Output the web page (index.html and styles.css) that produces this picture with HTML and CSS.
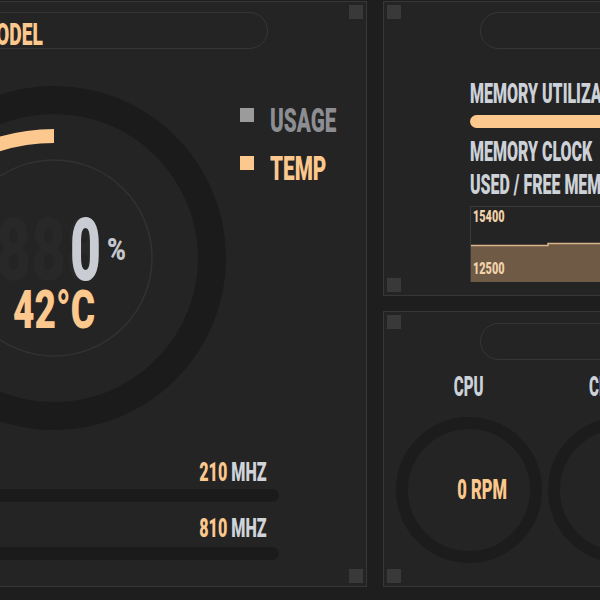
FILE: index.html
```html
<!DOCTYPE html>
<html lang="en">
<head>
<meta charset="utf-8">
<title>GPU Monitor</title>
<link rel="stylesheet" href="styles.css">
</head>
<body>
<div class="dash">
  <section class="panel panel-gpu">
    <i class="corner tl"></i><i class="corner tr"></i><i class="corner bl"></i><i class="corner br"></i>
    <div class="pill pill-gpu"><span class="cond pill-title">GPU MODEL</span></div>
    <div class="gauge-row">
      <svg class="gauge" width="350" height="350" viewBox="0 0 350 350">
        <circle class="g-ring" cx="175" cy="175" r="158"/>
        <circle class="g-inner" cx="175" cy="175" r="98"/>
        <path class="g-arc" d="M53 97.5 A190 190 0 0 1 175 53"/>
        <text class="g-ghost" x="117" y="197" textLength="105" lengthAdjust="spacingAndGlyphs">888</text>
        <text class="g-value" x="191" y="197" textLength="31" lengthAdjust="spacingAndGlyphs">0</text>
        <text class="g-unit" x="228" y="177" textLength="19" lengthAdjust="spacingAndGlyphs">%</text>
        <text class="g-temp" x="134" y="245" textLength="82" lengthAdjust="spacingAndGlyphs">42°C</text>
      </svg>
      <ul class="legend">
        <li class="legend-item usage"><i class="swatch"></i><span class="cond">USAGE</span></li>
        <li class="legend-item temp"><i class="swatch"></i><span class="cond">TEMP</span></li>
      </ul>
    </div>
    <div class="clocks">
      <div class="clock-label"><span class="cond"><b>210</b> MHZ</span></div>
      <div class="track"></div>
      <div class="clock-label second"><span class="cond"><b>810</b> MHZ</span></div>
      <div class="track second"></div>
    </div>
  </section>

  <div class="col-right">
    <section class="panel panel-mem">
      <i class="corner tl"></i><i class="corner tr"></i><i class="corner bl"></i><i class="corner br"></i>
      <div class="pill pill-side"></div>
      <div class="mem-body">
        <div class="mem-label first"><span class="cond">MEMORY UTILIZATION</span></div>
        <div class="mem-bar"></div>
        <div class="mem-label second"><span class="cond">MEMORY CLOCK</span></div>
        <div class="mem-label third"><span class="cond">USED / FREE MEMORY</span></div>
        <div class="chart">
          <svg class="chart-area" width="300" height="75" viewBox="0 0 300 75">
            <path class="area-fill" d="M0 38.5 H77 V36.5 H300 V75 H0 Z"/>
            <path class="area-line" d="M0 38.5 H77 V36.5 H300"/>
          </svg>
          <span class="cond chart-label top">15400</span>
          <span class="cond chart-label bottom">12500</span>
        </div>
      </div>
    </section>

    <section class="panel panel-fans">
      <i class="corner tl"></i><i class="corner tr"></i><i class="corner bl"></i><i class="corner br"></i>
      <div class="pill pill-side"></div>
      <div class="fans">
        <div class="fan">
          <div class="fan-name"><span class="cond">CPU</span></div>
          <div class="fan-dial">
            <svg width="146" height="146" viewBox="0 0 146 146"><circle class="dial-ring" cx="73" cy="73" r="67"/></svg>
            <div class="fan-rpm"><span class="cond">0 RPM</span></div>
          </div>
        </div>
        <div class="fan">
          <div class="fan-name"><span class="cond">CHASSIS</span></div>
          <div class="fan-dial">
            <svg width="146" height="146" viewBox="0 0 146 146"><circle class="dial-ring" cx="73" cy="73" r="67"/></svg>
            <div class="fan-rpm"><span class="cond">0 RPM</span></div>
          </div>
        </div>
      </div>
    </section>
  </div>
</div>
</body>
</html>
```
FILE: styles.css
```css
* { box-sizing: border-box; margin: 0; padding: 0; }
html, body { width: 600px; height: 600px; overflow: hidden; background: #1e1e1e; }
body {
  font-family: Roboto, "Liberation Sans", sans-serif;
  font-weight: 900;
  line-height: 1;
  color: #cdd1d8;
}

.dash {
  display: flex;
  align-items: flex-start;
  gap: 16px;
  width: 1000px;
  margin: 1px 0 0 -151px;
}

.panel { position: relative; background: #242424; border: 1px solid #373737; flex: none; }
.panel-gpu { width: 518px; height: 586px; }
.col-right { display: flex; flex-direction: column; gap: 15px; width: 420px; flex: none; }
.panel-mem { height: 295px; }
.panel-fans { height: 276px; }

.corner { position: absolute; width: 14px; height: 14px; background: #393939; }
.corner.tl { top: 3px; left: 3px; }
.corner.tr { top: 3px; right: 3px; }
.corner.bl { bottom: 3px; left: 3px; }
.corner.br { bottom: 3px; right: 3px; }

.pill { height: 37px; border: 1px solid #363636; border-radius: 19px; }
.pill-gpu { width: 378px; margin: 10px 0 0 40px; padding: 5px 0 0 45px; }
.pill-side { width: 300px; margin: 10px 0 0 96px; }
.panel-fans .pill-side { margin-top: 11px; }

.cond {
  display: inline-block;
  white-space: nowrap;
  line-height: 1;
  --sx: .6;
  transform: scaleX(var(--sx));
  transform-origin: left center;
}
.pill-title { font-size: 32px; color: #fcc88d; }

/* gauge */
.gauge-row { display: flex; align-items: flex-start; }
.gauge { display: block; flex: none; margin: 34px 0 0 29px; }
.gauge text { font-family: Roboto, "Liberation Sans", sans-serif; font-weight: 900; }
.g-ring { fill: none; stroke: #1b1b1b; stroke-width: 28; }
.g-inner { fill: none; stroke: #323232; stroke-width: 1.5; }
.g-arc { fill: none; stroke: #fcc88d; stroke-width: 14; }
.g-ghost { fill: #282828; font-size: 87px; }
.g-value { fill: #c9cdd3; font-size: 87px; }
.g-unit { fill: #c4c8ce; font-size: 32px; }
.g-temp { fill: #fcc88d; font-size: 53px; }

.legend { list-style: none; margin: 54px 0 0 11px; }
.legend-item { display: flex; align-items: flex-start; gap: 16px; height: 34px; font-size: 34px; }
.legend-item + .legend-item { margin-top: 14px; }
.legend-item .swatch { flex: none; width: 14px; height: 14px; margin-top: 5px; }
.legend .cond { --sx: .61; }
.usage { color: #8c8e92; }
.usage .swatch { background: #9b9b9b; }
.temp { color: #fcc88d; }
.temp .swatch { background: #fcc88d; }

/* clocks */
.clocks { width: 399px; margin: 26px 0 0 30px; }
.clock-label { height: 26px; padding-right: 12px; text-align: right; font-size: 26px; color: #cfd3da; }
.clock-label .cond { --sx: .62; transform-origin: right center; }
.clock-label b { font-weight: inherit; color: #fcc88d; }
.track { height: 13px; margin-top: 4px; border-radius: 7px; background: #1b1b1b; }
.clock-label.second { margin-top: 13px; }
.track.second { margin-top: 6px; }

/* memory */
.mem-body { padding-left: 86px; }
.mem-label { height: 28px; font-size: 28px; color: #cdd1d8; }
.mem-label .cond { --sx: .57; }
.mem-label.first { margin-top: 31px; }
.mem-bar { width: 300px; height: 13px; margin-top: 7px; border-radius: 7px; background: #fcc88d; }
.mem-label.second { margin-top: 10px; }
.mem-label.third { margin-top: 5px; }
.chart { position: relative; width: 300px; height: 76px; margin-top: 7px; border-top: 1px solid #3a3a3a; border-left: 1px solid #3a3a3a; }
.chart-area { display: block; }
.area-fill { fill: #6e5a45; }
.area-line { fill: none; stroke: #d9b58b; stroke-width: 1.5; }
.chart-label { position: absolute; left: 2px; font-size: 17px; color: #f2d2aa; --sx: .64; }
.chart-label.top { top: 1px; }
.chart-label.bottom { top: 53px; }

/* fans */
.fans { display: flex; gap: 12px; margin-top: 14px; padding-left: 15px; }
.fan { flex: none; width: 140px; display: flex; flex-direction: column; align-items: center; }
.fan-name { height: 27px; font-size: 27px; color: #cdd1d8; }
.fan-name .cond { --sx: .56; transform-origin: center; }
.fan-dial { position: relative; flex: none; width: 146px; height: 146px; margin-top: 16px; }
.fan-dial svg { display: block; }
.dial-ring { fill: none; stroke: #1c1c1c; stroke-width: 12; }
.fan-rpm { position: absolute; inset: 0; display: flex; align-items: center; justify-content: center; padding-left: 26px; font-size: 28px; color: #fcc88d; }
.fan-rpm .cond { --sx: .59; transform-origin: center; }
```
